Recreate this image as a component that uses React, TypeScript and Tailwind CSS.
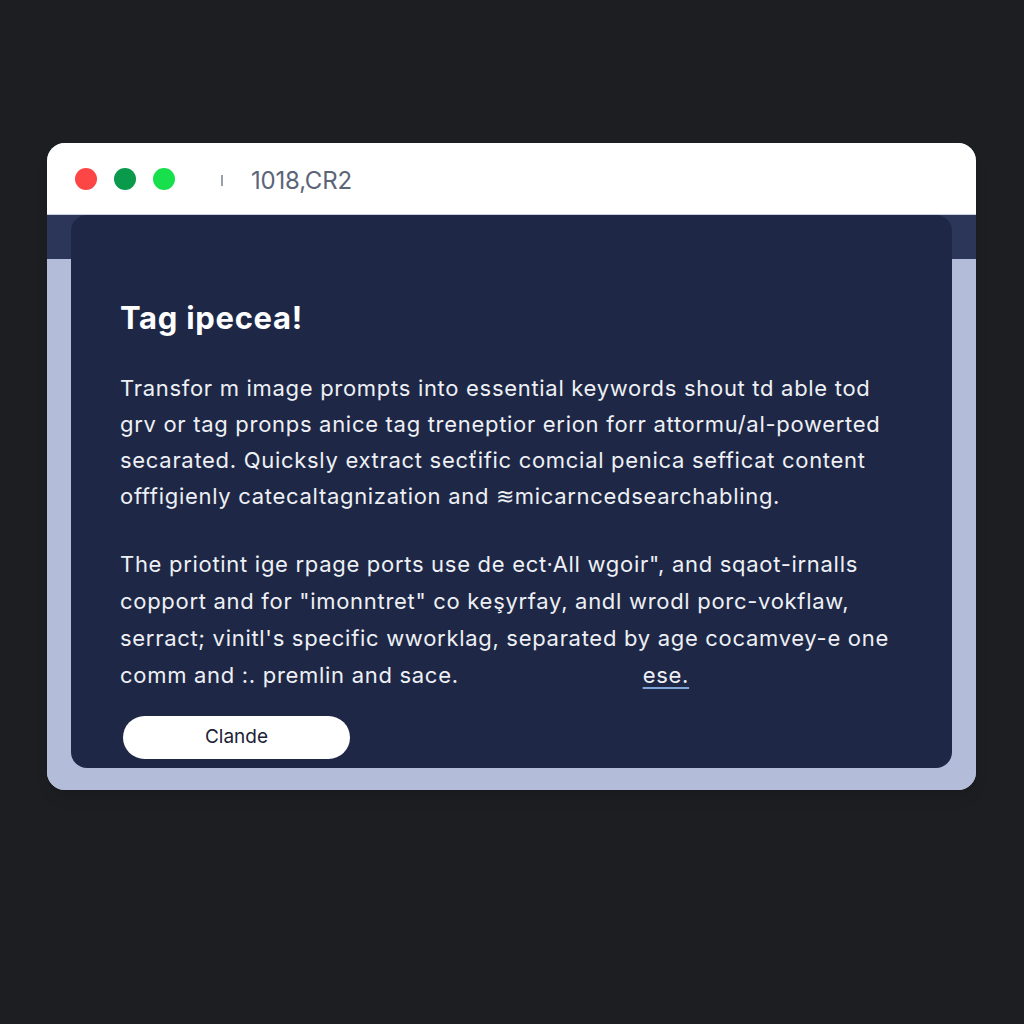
export default function App() {
  return (
    <div
      className="min-h-[1024px] w-full bg-[#1c1e22] pt-[143px]"
      style={{ fontFamily: "Inter, 'Open Sans', sans-serif" }}
    >
      <div className="mx-[47px] w-[929px] overflow-hidden rounded-[18px] bg-[#b3bcd8] shadow-lg">
        {/* title bar */}
        <div className="flex h-[72px] items-center border-b border-[#c9cfdd] bg-white pl-[28px]">
          <div className="flex items-center gap-[17px]">
            <span className="h-[22px] w-[22px] rounded-full bg-[#fc4646]" />
            <span className="h-[22px] w-[22px] rounded-full bg-[#0a9a4c]" />
            <span className="h-[22px] w-[22px] rounded-full bg-[#18e04c]" />
          </div>
          <span className="ml-[46px] mt-[4px] h-[11px] w-[2px] bg-[#9aa0ab]" />
          <span className="ml-[28px] mt-[4px] text-[24px] tracking-[-0.2px] text-[#5c6577]">1018,CR2</span>
        </div>

        {/* body */}
        <div className="bg-[linear-gradient(to_bottom,#2b3658_44px,#b3bcd8_44px)] px-[24px] pb-[22px]">
          <div className="rounded-[16px] bg-[#1e2846] pl-[49px] pr-[30px] pt-[84px] pb-[9px] text-[#eef0f5]">
            <h1 className="text-[31px] font-bold leading-[38px] tracking-[0.7px] text-white">Tag ipecea!</h1>

            <p className="mt-[33px] text-[22px] leading-[36px] tracking-[0.7px]">
              Transfor m image prompts into essential keywords shout td able tod
              <br />
              grv or tag pronps anice tag treneptior erion forr attormu/al-powerted
              <br />
              secarated. Quicksly extract secťific comcial penica sefficat content
              <br />
              offfigienly catecaltagnization and ≋micarncedsearchabling.
            </p>

            <p className="mt-[32px] text-[22px] leading-[37px] tracking-[0.7px]">
              The priotint ige rpage ports use de ect·All wgoir", and sqaot-irnalls
              <br />
              copport and for "imonntret" co keşyrfay, andl wrodl porc-vokflaw,
              <br />
              serract; vinitl's specific wworklag, separated by age cocamvey-e one
              <br />
              comm and :. premlin and sace.
              <span className="ml-[184px] underline decoration-[#7fa6d6] underline-offset-[4px]">ese.</span>
            </p>

            <button className="ml-[3px] mt-[22px] flex h-[43px] w-[227px] items-center justify-center rounded-full bg-white text-[19px] text-[#1c2236]">
              Clande
            </button>
          </div>
        </div>
      </div>
    </div>
  );
}
